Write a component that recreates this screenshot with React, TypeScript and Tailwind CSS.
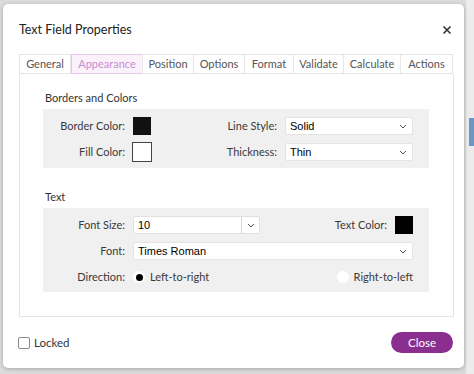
import React from "react";

const Chevron = ({ className = "" }: { className?: string }) => (
  <svg width="8" height="5" viewBox="0 0 8 5" className={className}>
    <path d="M1 1 L4 4 L7 1" fill="none" stroke="#555" strokeWidth="1" />
  </svg>
);

const Select = ({ value, w }: { value: string; w: string }) => (
  <div
    className={`${w} h-[18px] bg-white border border-[#e4e4e4] rounded-[2px] flex items-center justify-between pl-[4px] pr-[5px] font-['Liberation_Sans',Arial,sans-serif] text-[11px] text-black`}
  >
    <span className="font-medium">{value}</span>
    <Chevron />
  </div>
);

const tabs: [string, string][] = [
  ["General", "w-[52px]"],
  ["Appearance", "w-[72px]"],
  ["Position", "w-[52px]"],
  ["Options", "w-[52px]"],
  ["Format", "w-[50px]"],
  ["Validate", "w-[51px]"],
  ["Calculate", "w-[58px]"],
  ["Actions", "w-[53px]"],
];

export default function App() {
  return (
    <div className="w-[474px] h-[374px] bg-[#dcdcdc] relative overflow-hidden font-['Lato','Open_Sans',sans-serif] text-[#3a3a3a]">
      <div className="absolute right-0 top-0 w-[8px] h-[374px] bg-[#ececec]" />
      <div className="absolute right-0 top-[118px] w-[5px] h-[28px] bg-[#6b97c8]" />
      <div className="absolute left-[3px] top-[4px] w-[461px] h-[364px] bg-white rounded-[5px] shadow-[0_1px_4px_rgba(0,0,0,0.25)] flex flex-col pl-[16px]">
        <div className="h-[50px] flex items-center justify-between pr-[12px] pt-[2px]">
          <span className="text-[12.5px] text-[#222]">Text Field Properties</span>
          <svg width="10" height="10" viewBox="0 0 10 10">
            <path d="M1.5 1.5 L8.5 8.5 M8.5 1.5 L1.5 8.5" stroke="#333" strokeWidth="1.6" />
          </svg>
        </div>
        <div className="flex h-[20px]">
          {tabs.map(([t, w]) => (
            <div
              key={t}
              className={`${w} h-[20px] flex items-center justify-center text-[11px] border ${
                t === "Appearance"
                  ? "bg-[#fbf1fb] border-[#e6c8ec] text-[#c68fd2]"
                  : "border-[#e6e6e6] text-[#555] -ml-px first:ml-0"
              }`}
            >
              {t}
            </div>
          ))}
        </div>
        <div className="w-[435px] h-[243px] border border-t-0 border-[#e4e4e4] pl-[23px] pt-[16px]">
          <div className="text-[11px] text-[#333] h-[16px] pl-[2px]">Borders and Colors</div>
          <div className="w-[386px] h-[59px] mt-[3px] bg-[#f0f0f0] flex flex-col pt-[8px] gap-[7px] pr-[16px] text-[11px]">
            <div className="flex items-center h-[18px]">
              <span className="w-[82px] text-right">Border Color:</span>
              <div className="ml-[8px] w-[18px] h-[18px] bg-[#111]" />
              <span className="flex-1 text-right">Line Style:</span>
              <div className="ml-[8px]">
                <Select value="Solid" w="w-[128px]" />
              </div>
            </div>
            <div className="flex items-center h-[20px]">
              <span className="w-[82px] text-right">Fill Color:</span>
              <div className="ml-[7px] w-[20px] h-[20px] bg-white border-[1.5px] border-[#444]" />
              <span className="flex-1 text-right">Thickness:</span>
              <div className="ml-[8px]">
                <Select value="Thin" w="w-[128px]" />
              </div>
            </div>
          </div>
          <div className="text-[11px] text-[#333] h-[16px] pl-[2px] mt-[21px]">Text</div>
          <div className="w-[386px] h-[84px] mt-[3px] bg-[#f0f0f0] flex flex-col pt-[8px] gap-[8px] pr-[16px] text-[11px]">
            <div className="flex items-center h-[18px]">
              <span className="w-[82px] text-right">Font Size:</span>
              <div className="ml-[8px] w-[127px] h-[18px] bg-white border border-[#e0e0e0] rounded-[2px] flex items-center font-['Liberation_Sans',Arial,sans-serif] text-[11px] text-black">
                <span className="flex-1 pl-[4px] font-medium">10</span>
                <div className="w-[18px] h-full border-l border-[#d8d8d8] flex items-center justify-center">
                  <Chevron />
                </div>
              </div>
              <span className="flex-1 text-right">Text Color:</span>
              <div className="ml-[8px] w-[18px] h-[18px] bg-black" />
            </div>
            <div className="flex items-center h-[18px]">
              <span className="w-[82px] text-right">Font:</span>
              <div className="ml-[8px]">
                <Select value="Times Roman" w="w-[280px]" />
              </div>
            </div>
            <div className="flex items-center h-[18px]">
              <span className="w-[82px] text-right">Direction:</span>
              <div className="ml-[8px] w-[12px] h-[12px] rounded-full bg-white flex items-center justify-center">
                <div className="w-[7px] h-[7px] rounded-full bg-black" />
              </div>
              <span className="ml-[5px]">Left-to-right</span>
              <div className="flex-1" />
              <div className="w-[12px] h-[12px] rounded-full bg-white" />
              <span className="ml-[5px]">Right-to-left</span>
            </div>
          </div>
        </div>
        <div className="flex items-center justify-between h-[51px] pr-[11px] -ml-[1px]">
          <div className="flex items-center gap-[4px]">
            <div className="w-[12px] h-[12px] border border-[#888] rounded-[2px] bg-white" />
            <span className="text-[11.5px] text-[#333]">Locked</span>
          </div>
          <div className="w-[62px] h-[21px] rounded-full bg-[#8a2f8f] text-white text-[11.5px] flex items-center justify-center">
            Close
          </div>
        </div>
      </div>
    </div>
  );
}
